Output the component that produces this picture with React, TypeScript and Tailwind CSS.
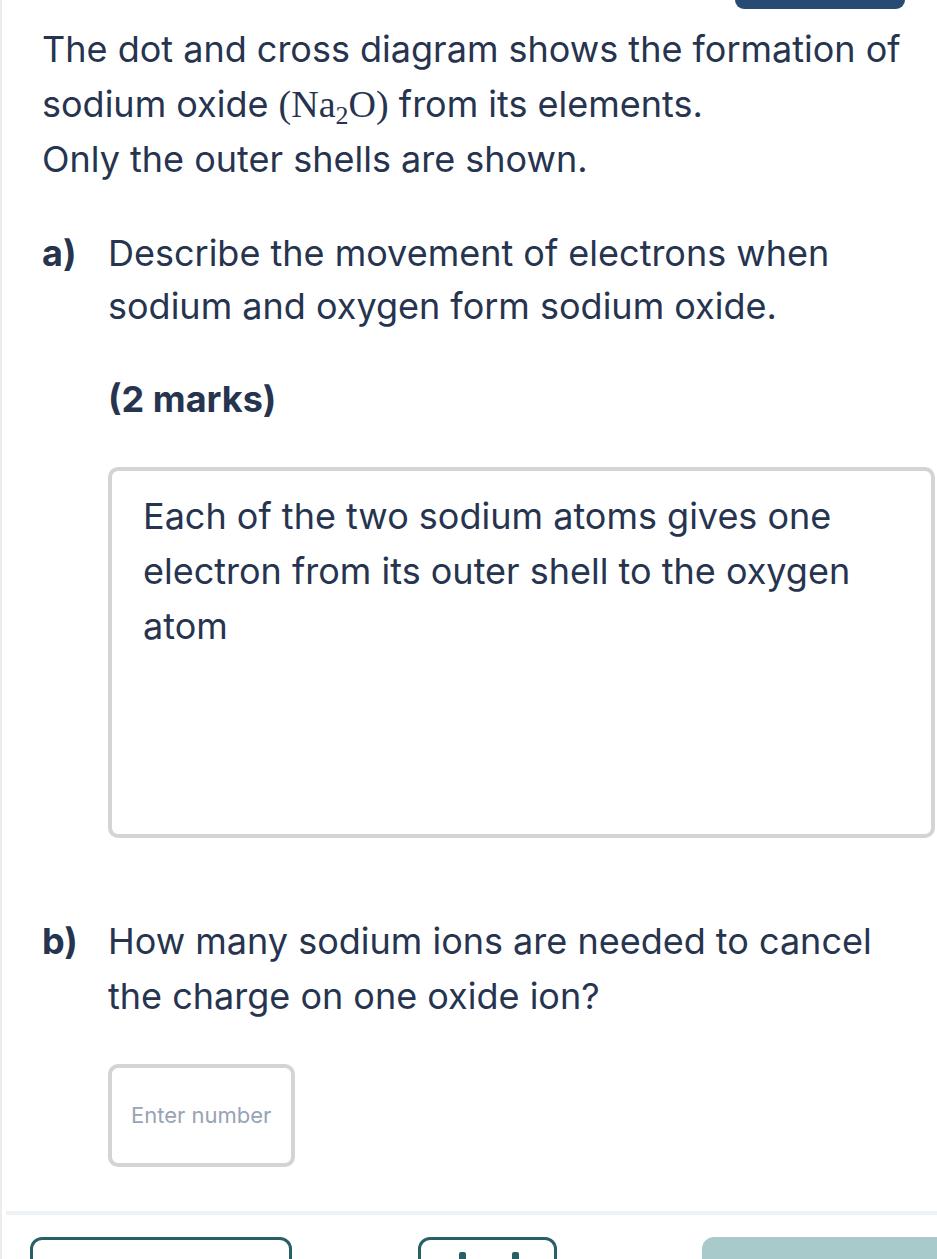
export default function App() {
  return (
    <div className="min-h-screen w-[937px] overflow-hidden bg-white border-l-2 border-[#ececec] font-['Inter',sans-serif] text-[#27344f]">
      {/* progress bar peeking from the header */}
      <div className="flex justify-end pr-[32px]">
        <div className="h-[9px] w-[170px] rounded-b-[10px] bg-[#274b72]" />
      </div>

      <div className="pl-[40px] pr-[4px]">
        <p className="mt-[13px] text-[36px] leading-[55px]">
          The dot and cross diagram shows the formation of
          <br />
          sodium oxide{" "}
          <span className="font-['Liberation_Serif',serif] text-[38px]">
            (Na<sub className="text-[26px] leading-none">2</sub>O)
          </span>{" "}
          from its elements.
          <br />
          Only the outer shells are shown.
        </p>

        {/* part a */}
        <div className="mt-[40px] flex">
          <span className="w-[66px] shrink-0 text-[36px] font-bold leading-[53px]">a)</span>
          <div className="flex-1">
            <p className="text-[36px] leading-[53px]">
              Describe the movement of electrons when
              <br />
              sodium and oxygen form sodium oxide.
            </p>
            <p className="mt-[39px] text-[36px] font-bold leading-[55px]">(2 marks)</p>
            <div className="mt-[40px] h-[371px] w-[827px] rounded-[10px] border-4 border-[#d4d4d4] pl-[31px] pt-[18px]">
              <p className="text-[36px] leading-[55px]">
                Each of the two sodium atoms gives one
                <br />
                electron from its outer shell to the oxygen
                <br />
                atom
              </p>
            </div>
          </div>
        </div>

        {/* part b */}
        <div className="mt-[76px] flex">
          <span className="w-[66px] shrink-0 text-[36px] font-bold leading-[55px]">b)</span>
          <div className="flex-1">
            <p className="text-[36px] leading-[55px]">
              How many sodium ions are needed to cancel
              <br />
              the charge on one oxide ion?
            </p>
            <div className="mt-[40px] flex h-[103px] w-[187px] items-center rounded-[10px] border-4 border-[#d4d4d4] pl-[19px]">
              <span className="text-[22px] text-[#98a3b6]">Enter number</span>
            </div>
          </div>
        </div>
      </div>

      <div className="ml-[4px] mt-[44px] h-[4px] bg-[#edf2f7]" />

      {/* footer buttons */}
      <div className="mt-[22px] flex items-start">
        <div className="ml-[28px] h-[40px] w-[262px] rounded-t-[12px] border-[3px] border-[#2a5f66]" />
        <div className="relative ml-[126px] h-[40px] w-[139px] rounded-t-[12px] border-[3px] border-[#2a5f66]">
          <span className="absolute left-[38px] top-[12px] h-[12px] w-[7px] rounded-[2px] bg-[#2a5f66]" />
          <span className="absolute left-[91px] top-[12px] h-[12px] w-[7px] rounded-[2px] bg-[#2a5f66]" />
        </div>
        <div className="ml-[145px] h-[40px] flex-1 rounded-tl-[12px] bg-[#a9caca]" />
      </div>
    </div>
  );
}
